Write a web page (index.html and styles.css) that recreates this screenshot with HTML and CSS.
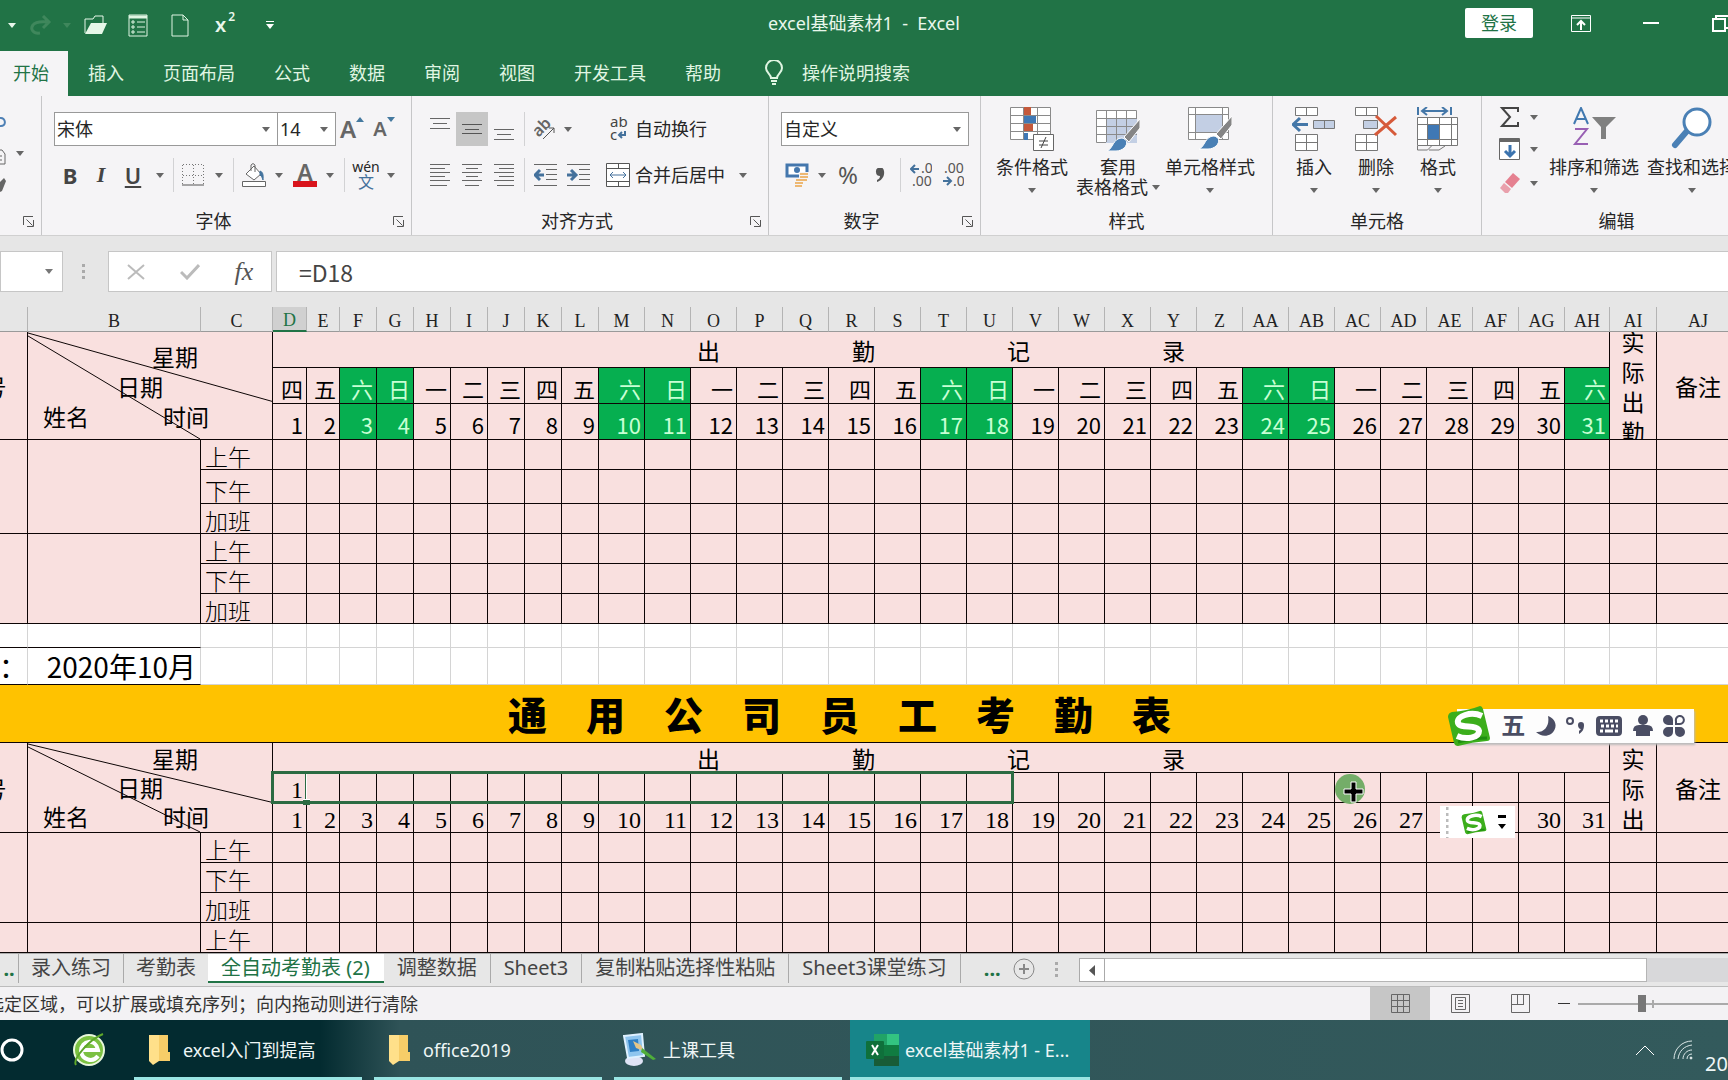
FILE: index.html
```html
<!DOCTYPE html>
<html lang="zh-CN">
<head>
<meta charset="utf-8">
<title>excel基础素材1 - Excel</title>
<link rel="stylesheet" href="styles.css">
</head>
<body>
<svg class="defs" aria-hidden="true">
  <symbol id="caret" viewBox="0 0 8 5"><path d="M0 0h8L4 5z" fill="currentColor"/></symbol>
  <symbol id="launch" viewBox="0 0 11 11"><path d="M.5 9V.5H10M3.500 3.500l6 6M10.500 4v6.500H4" fill="none" stroke="#555"/></symbol>
  <symbol id="folder" viewBox="0 0 22 32"><path d="M3 1h17v22H3z" fill="#e9b949"/><path d="M1 1h10v26l-6 4-4-4z" fill="#ffe08a"/><path d="M11 1h9v17h2v9H11z" fill="#f7cd68"/></symbol>
  <symbol id="sogou" viewBox="0 0 44 42"><path d="M5 7Q20 6 33 1q2 0 3 3l7 29q0 3-3 3Q25 37 11 41q-3 0-4-3L1 12q0-4 4-5z" fill="#3cae1c"/><path d="M11 37q14-4 29-4" fill="none" stroke="#1f8f10" stroke-width="3"/><path d="M35 11C24 6 9 11 11 18c2 6 20 1 21 8 0 7-13 9-22 5" fill="none" stroke="#fff" stroke-width="6"/></symbol>
</svg>

<header class="titlebar">
  <div class="quick">
    <button aria-label="撤消选项"><svg width="8" height="5"><use href="#caret"/></svg></button>
    <button class="dim" aria-label="恢复"><svg width="22" height="20" viewBox="0 0 22 20" fill="none" stroke="currentColor" stroke-width="3"><path d="M10 18C3 19 0 14 3 10c2-3 7-4 16-3M13 1l6 6-6 6"/></svg></button>
    <button class="dim" aria-label="恢复选项"><svg width="8" height="5"><use href="#caret"/></svg></button>
    <button aria-label="打开"><svg width="24" height="20" viewBox="0 0 24 20"><path d="M1 18V4h8l2-3h8v7" fill="none" stroke="#e6f7e8"/><path d="M7 8h16l-5 11H1z" fill="#e6f7e8"/></svg></button>
    <button aria-label="窗体"><svg width="20" height="23" viewBox="0 0 20 23" fill="none" stroke="#dff5e2"><path d="M1 1h18v21H1z"/><path d="M1 3h18" stroke-width="3"/><path d="M4 7h2v2H4zM4 12h2v2H4zM4 17h2v2H4zM9 8h8M9 13h8M9 18h8"/></svg></button>
    <button aria-label="新建"><svg width="18" height="23" viewBox="0 0 18 23" fill="none" stroke="#dff5e2"><path d="M1 1h11l5 5v16H1zM12 1v5h5"/></svg></button>
    <button class="sup" aria-label="上标">x<sup>2</sup></button>
    <button aria-label="自定义快速访问工具栏"><svg width="8" height="8" viewBox="0 0 8 8"><path d="M0 .5h8" stroke="#fff"/><path d="M0 3h8L4 8z" fill="#fff"/></svg></button>
  </div>
  <h1>excel基础素材1&nbsp; -&nbsp; Excel</h1>
  <div class="window">
    <button class="login">登录</button>
    <button class="wbtn" aria-label="功能区显示选项"><svg width="20" height="17" viewBox="0 0 20 17" fill="none" stroke="#fff"><path d="M.5.5h19v16H.5zM1 3h18"/><path d="M10 15V6M6 10l4-4 4 4" stroke-width="2"/></svg></button>
    <button class="wbtn" aria-label="最小化"><svg width="16" height="2"><path d="M0 1h16" stroke="#fff" stroke-width="2"/></svg></button>
    <button class="wbtn" aria-label="还原"><svg width="18" height="17" viewBox="0 0 18 17" fill="none" stroke="#fff" stroke-width="2"><path d="M1 4h12v12H1zM4 4V1h13v12h-4"/></svg></button>
  </div>
</header>

<nav class="tabs">
  <button class="on">开始</button><button>插入</button><button>页面布局</button><button>公式</button><button>数据</button><button>审阅</button><button>视图</button><button>开发工具</button><button>帮助</button>
  <button class="tell"><svg width="18" height="25" viewBox="0 0 18 25" fill="none" stroke="#dff5e2" stroke-width="2"><path d="M6 18c0-4-5-5-5-10a8 8 0 0 1 16 0c0 5-5 6-5 10zM6 21h6M7 24h4"/></svg>操作说明搜索</button>
</nav>

<main class="ribbon">
  <section class="group clip">
    <div class="cliptools">
      <svg width="8" height="90" viewBox="0 0 8 90" fill="none"><path d="M0 6c6-1 7 9 0 8" stroke="#4e80b5" stroke-width="2"/><path d="M-6 38h8l3 4v10h-11M-4 44h6M-4 48h6" stroke="#666"/><path d="M-2 72l6-6 2 3-4 10-4 2z" fill="#666"/></svg>
      <button aria-label="复制选项"><svg width="8" height="5"><use href="#caret"/></svg></button>
    </div>
    <footer><span></span><button aria-label="剪贴板设置"><svg width="11" height="11"><use href="#launch"/></svg></button></footer>
  </section>

  <section class="group font">
    <div class="row font1">
      <div class="combo"><input aria-label="字体" value="宋体"><button aria-label="选择字体"><svg width="8" height="5"><use href="#caret"/></svg></button></div>
      <div class="combo"><input aria-label="字号" value="14"><button aria-label="选择字号"><svg width="8" height="5"><use href="#caret"/></svg></button></div>
      <button class="grow" aria-label="增大字号">A<svg width="8" height="5" viewBox="0 0 8 5"><path d="M0 5h8L4 0z" fill="#44799f"/></svg></button>
      <button class="grow less" aria-label="减小字号">A<svg width="8" height="5" viewBox="0 0 8 5"><path d="M0 0h8L4 5z" fill="#44799f"/></svg></button>
    </div>
    <div class="row font2">
      <button class="b">B</button><button class="i">I</button><button class="u">U</button><button aria-label="下划线选项"><svg width="8" height="5"><use href="#caret"/></svg></button><i class="sep"></i>
      <button aria-label="边框"><svg width="22" height="22" viewBox="0 0 22 22" stroke="#777" fill="none"><path d="M1 .5h20M.5 1v20M21.500 1v20M11.500 1v20M1 11.500h20" stroke-dasharray="1 2"/><path d="M0 21h22" stroke="#555"/></svg></button><button aria-label="边框选项"><svg width="8" height="5"><use href="#caret"/></svg></button><i class="sep"></i>
      <button aria-label="填充颜色"><svg width="24" height="24" viewBox="0 0 24 24" fill="none" stroke="#666"><path d="M4 11l8-8 7 8-7 6z" fill="#fff"/><path d="M9 8V2q2-3 4 0v7"/><path d="M18 8q4 1 3 9-1-4-3-5z" fill="#44749e" stroke="#44749e"/><path d="M.5 18.500h23v5H.5z" fill="#fff"/></svg></button><button aria-label="填充选项"><svg width="8" height="5"><use href="#caret"/></svg></button>
      <button class="colour" aria-label="字体颜色">A</button><button aria-label="字体颜色选项"><svg width="8" height="5"><use href="#caret"/></svg></button><i class="sep"></i>
      <button class="wen">wén<span>文</span></button><button aria-label="拼音选项"><svg width="8" height="5"><use href="#caret"/></svg></button>
    </div>
    <footer><span>字体</span><button aria-label="字体设置"><svg width="11" height="11"><use href="#launch"/></svg></button></footer>
  </section>

  <section class="group align">
    <div class="halves">
      <div class="stack">
        <div class="row al1">
          <button aria-label="顶端对齐"><svg width="20" height="22" viewBox="0 0 20 22" stroke="#666"><path d="M0 .5h20M3 5.500h14M0 10.500h20"/></svg></button>
          <button class="pressed" aria-label="垂直居中"><svg width="20" height="22" viewBox="0 0 20 22" stroke="#555"><path d="M0 6.500h20M3 11.500h14M0 15.500h20"/></svg></button>
          <button aria-label="底端对齐"><svg width="20" height="22" viewBox="0 0 20 22" stroke="#666"><path d="M0 11.500h20M3 16.500h14M0 21.500h20"/></svg></button>
          <i class="sep"></i>
          <button aria-label="方向"><svg width="22" height="22" viewBox="0 0 22 22"><text x="0" y="15" transform="rotate(-45 8 12)" font-size="16" font-weight="600" fill="#666">ab</text><path d="M9 21L20 10M15 10h5v5" stroke="#555" fill="none"/></svg></button>
          <button aria-label="方向选项"><svg width="8" height="5"><use href="#caret"/></svg></button>
        </div>
        <div class="row al2">
          <button aria-label="左对齐"><svg width="20" height="22" viewBox="0 0 20 22" stroke="#666"><path d="M0 .5h20M0 4.500h15M0 8.500h20M0 12.500h15M0 16.500h20M0 21.500h17"/></svg></button>
          <button aria-label="居中"><svg width="20" height="22" viewBox="0 0 20 22" stroke="#666"><path d="M0 .5h20M4 4.500h12M0 8.500h20M4 12.500h12M0 16.500h20M3 21.500h14"/></svg></button>
          <button aria-label="右对齐"><svg width="20" height="22" viewBox="0 0 20 22" stroke="#666"><path d="M0 .5h20M5 4.500h15M0 8.500h20M5 12.500h15M0 16.500h20M3 21.500h17"/></svg></button>
          <i class="sep"></i>
          <button aria-label="减少缩进"><svg width="23" height="22" viewBox="0 0 23 22" stroke="#666"><path d="M0 .5h23M12 5.500h11M12 10.500h11M12 15.500h11M0 21.500h23"/><path d="M6 6l-5 5 5 5M1 11h9" stroke="#44719c" stroke-width="3" fill="none"/></svg></button>
          <button aria-label="增加缩进"><svg width="23" height="22" viewBox="0 0 23 22" stroke="#666"><path d="M0 .5h23M12 5.500h11M12 10.500h11M12 15.500h11M0 21.500h23"/><path d="M4 6l5 5-5 5M0 11h9" stroke="#44719c" stroke-width="3" fill="none"/></svg></button>
        </div>
      </div>
      <i class="sep tall"></i>
      <div class="stack">
        <div class="row"><button class="labelled"><svg width="24" height="24" viewBox="0 0 24 24"><text x="4" y="10" font-size="15" fill="#444">ab</text><text x="4" y="23" font-size="15" fill="#444">c</text><path d="M19 14v4h-6M16 15l-3 3 3 3" stroke="#44719c" stroke-width="2" fill="none"/></svg>自动换行</button></div>
        <div class="row"><button class="labelled"><svg width="24" height="24" viewBox="0 0 24 24" fill="#fff" stroke="#555"><path d="M.5.500h23v23H.5zM.5 5.500h23M.5 18.500h23M12.500 1v5M12.500 18v5"/><path d="M4 12h16M7 9l-3 3 3 3M17 9l3 3-3 3" stroke="#44719c" fill="none"/></svg>合并后居中</button><button class="drop" aria-label="合并选项"><svg width="8" height="5"><use href="#caret"/></svg></button></div>
      </div>
    </div>
    <footer><span>对齐方式</span><button aria-label="对齐设置"><svg width="11" height="11"><use href="#launch"/></svg></button></footer>
  </section>

  <section class="group number">
    <div class="row"><div class="combo pick"><select aria-label="数字格式"><option>自定义</option></select><svg width="8" height="5"><use href="#caret"/></svg></div></div>
    <div class="row num2">
      <button aria-label="会计格式"><svg width="24" height="24" viewBox="0 0 24 24"><path d="M2 2h20v11H2z" fill="#fff" stroke="#4477ad" stroke-width="3"/><circle cx="12" cy="7" r="3" fill="#4477ad"/><path d="M14 9h10v12h-6v3H9v-8h5z" fill="#f5f4f6"/><path d="M15 11h8M15 14h8M11 17h11M10 20h8M10 23h7" stroke="#edb873" stroke-width="2"/></svg></button>
      <button aria-label="会计格式选项"><svg width="8" height="5"><use href="#caret"/></svg></button>
      <button class="pct">%</button>
      <button aria-label="千位分隔"><svg width="10" height="14" viewBox="0 0 10 14"><path d="M1 4a4 4 0 0 1 8-1c1 6-3 10-7 11v-2c2-1 3-2 3-4-2 0-4-1-4-4z" fill="#555"/></svg></button>
      <i class="sep"></i>
      <button class="dec" aria-label="增加小数位"><svg width="22" height="24" viewBox="0 0 22 24"><text x="11" y="10" font-size="14">.0</text><text x="2" y="23" font-size="14">.00</text><path d="M5 2L1 6l4 4M1 6h8" fill="none" stroke="#44719c" stroke-width="2"/></svg></button>
      <button class="dec" aria-label="减少小数位"><svg width="22" height="24" viewBox="0 0 22 24"><text x="2" y="10" font-size="14">.00</text><text x="11" y="23" font-size="14">.0</text><path d="M5 14l4 4-4 4M1 18h8" fill="none" stroke="#44719c" stroke-width="2"/></svg></button>
    </div>
    <footer><span>数字</span><button aria-label="数字设置"><svg width="11" height="11"><use href="#launch"/></svg></button></footer>
  </section>

  <section class="group styles">
    <div class="bigs">
      <button class="big"><svg width="44" height="44" viewBox="0 0 44 44" fill="none" stroke="#8a8a8a"><path d="M.5.500h40v32h-40z" fill="#fff"/><path d="M13 0h8v8h-8zM13 17h10v8H13z" fill="#c4593b" stroke="none"/><path d="M13 9h13v7H13zM13 26h5v7h-5z" fill="#3f78b5" stroke="none"/><path d="M13.500 0v33M27.500 0v33M0 8.500h41M0 16.500h41M0 24.500h41"/><path d="M23.500 27.500h20v16h-20z" fill="#fff" stroke="#666"/><path d="M29 34h9M29 38h9M36 30l-5 11" stroke="#444"/></svg><span>条件格式</span><svg width="8" height="5"><use href="#caret"/></svg></button>
      <button class="big"><svg width="44" height="44" viewBox="0 0 44 44" fill="none" stroke="#8a8a8a"><path d="M.5 3.500h40v32h-40z" fill="#fff"/><path d="M10 12h31v24H10z" fill="#c3cfe4" stroke="none"/><path d="M10.500 3v32M20.500 3v32M30.500 3v32M0 11.500h41M0 19.500h41M0 27.500h41"/><path d="M44 12L28 30l5 5 11-14z" fill="#858585" stroke="#fff"/><path d="M11 44c6-2 6-13 15-13 9 2 4 13-6 13z" fill="#4a80b5" stroke="#fff"/></svg><span>套用</span><span class="line">表格格式<svg width="8" height="5"><use href="#caret"/></svg></span></button>
      <button class="big wide"><svg width="44" height="44" viewBox="0 0 44 44" fill="none" stroke="#8a8a8a"><path d="M.5.500h40v32h-40z" fill="#fff"/><path d="M8 8h26v17H8z" fill="#c3cfe4" stroke="none"/><path d="M7.500 0v33M34.500 0v33M0 7.500h41M0 25.500h41"/><path d="M44 9L28 27l5 5 11-14z" fill="#858585" stroke="#fff"/><path d="M11 42c6-2 6-13 15-13 9 2 4 13-6 13z" fill="#4a80b5" stroke="#fff"/></svg><span>单元格样式</span><svg width="8" height="5"><use href="#caret"/></svg></button>
    </div>
    <footer><span>样式</span></footer>
  </section>

  <section class="group cells">
    <div class="bigs">
      <button class="big"><svg width="44" height="44" viewBox="0 0 44 44" fill="#fff" stroke="#777"><path d="M3.500.500h22v8h-22zM14.500.500v8M3.500 27.500h22v16h-22zM14.500 27.500v16M3.500 35.500h22"/><path d="M21.500 13.500h21v8h-21zM32.500 13.500v8" fill="#c3cfe4"/><path d="M16 17.500H2M8 11l-7 6.500L8 24" fill="none" stroke="#4477a8" stroke-width="3"/></svg><span>插入</span><svg width="8" height="5"><use href="#caret"/></svg></button>
      <button class="big"><svg width="44" height="44" viewBox="0 0 44 44" fill="#fff" stroke="#777"><path d="M1.500.500h22v8h-22zM12.500.500v8M1.500 27.500h22v16h-22zM12.500 27.500v16M1.500 35.500h22"/><path d="M9.500 13.500h14v8h-14z" fill="#c3cfe4"/><path d="M22 9l20 19M42 10L21 28" fill="none" stroke="#d65a3a" stroke-width="3"/></svg><span>删除</span><svg width="8" height="5"><use href="#caret"/></svg></button>
      <button class="big"><svg width="44" height="44" viewBox="0 0 44 44" fill="none" stroke="#777"><path d="M1.500 10.500h40v28h-40z" fill="#fff"/><path d="M11.500 10v29M23.500 10v29M35.500 10v29M1 17.500h41M1 32.500h41"/><path d="M12 18h11v14H12z" fill="#3f78b5" stroke="none"/><path d="M1.500 39v4h10l4-4M13 43h10l6-4"/><path d="M2 0v8M35 0v8" stroke="#4477a8" stroke-width="2"/><path d="M7 4h23M11 0L6 4l5 4M26 0l5 4-5 4" stroke="#4477a8" stroke-width="2"/></svg><span>格式</span><svg width="8" height="5"><use href="#caret"/></svg></button>
    </div>
    <footer><span>单元格</span></footer>
  </section>

  <section class="group edit">
    <div class="bigs">
      <div class="minis">
        <button aria-label="自动求和"><svg width="22" height="20" viewBox="0 0 22 20" fill="none" stroke="#444" stroke-width="2"><path d="M19 5V1H3l8 9-8 9h16v-4"/></svg><svg width="8" height="5"><use href="#caret"/></svg></button>
        <button aria-label="填充"><svg width="22" height="22" viewBox="0 0 22 22" fill="#fff" stroke="#666"><path d="M.5.500h20v21H.5z"/><path d="M1 2.500h20" stroke-width="3"/><path d="M11 7v11M6 13l5 5 5-5" fill="none" stroke="#3b73ae" stroke-width="3"/></svg><svg width="8" height="5"><use href="#caret"/></svg></button>
        <button aria-label="清除"><svg width="22" height="20" viewBox="0 0 22 20"><path d="M14 0l7 6-8 9-7-6z" fill="#e58090"/><path d="M5 10l7 6-3 4H6l-5-5z" fill="#e9a0ac"/></svg><svg width="8" height="5"><use href="#caret"/></svg></button>
      </div>
      <button class="big wide"><svg width="44" height="44" viewBox="0 0 44 44"><path d="M2 17L9 1l7 16M5 12h8" fill="none" stroke="#4179b0" stroke-width="2"/><path d="M3 22h12L3 37h13" fill="none" stroke="#985fb3" stroke-width="2"/><path d="M20 10h24L34 20v12h-5V20z" fill="#808080"/></svg><span>排序和筛选</span><svg width="8" height="5"><use href="#caret"/></svg></button>
      <button class="big wide"><svg width="44" height="44" viewBox="0 0 44 44"><path d="M17 24L5 38" stroke="#4a80b5" stroke-width="6" stroke-linecap="round"/><circle cx="27" cy="15" r="13" fill="#fff" stroke="#4a80b5" stroke-width="3"/></svg><span>查找和选择</span><svg width="8" height="5"><use href="#caret"/></svg></button>
    </div>
    <footer><span>编辑</span></footer>
  </section>
</main>

<div class="formula">
  <div class="namebox"><button aria-label="名称框"><svg width="8" height="5"><use href="#caret"/></svg></button></div>
  <svg class="grip" width="4" height="16" viewBox="0 0 4 16"><path d="M0 0h3v3H0zM0 6h3v3H0zM0 12h3v3H0z" fill="#aaa"/></svg>
  <div class="fxbox">
    <button aria-label="取消"><svg width="18" height="16" viewBox="0 0 18 16"><path d="M1 1l16 14M17 1L1 15" stroke="#bbb" stroke-width="2"/></svg></button>
    <button aria-label="输入"><svg width="20" height="16" viewBox="0 0 20 16"><path d="M1 8l6 6L19 1" fill="none" stroke="#bbb" stroke-width="3"/></svg></button>
    <button class="fx">fx</button>
  </div>
  <input class="expr" aria-label="编辑栏" value="=D18">
</div>

<div class="sheet">
  <div class="canvas">
    <table id="grid"></table>
    <div class="range"></div><div class="active"></div><div class="handle"></div>
    <svg class="pointer" width="32" height="32" viewBox="0 0 32 32"><circle cx="15" cy="15" r="15" fill="#74ad68"/><path d="M16 8h5v7h7v5h-7v8h-5v-8H9v-5h7z" fill="#000" stroke="#fff"/></svg>
    <div class="ime">
      <svg width="44" height="42"><use href="#sogou"/></svg>
      <b>五</b>
      <svg width="20" height="22" viewBox="0 0 20 22"><path d="M12 1c9 3 10 13 3 18-5 3-11 2-15-2 8 1 14-6 12-16z" fill="#4a4d63"/></svg>
      <svg width="20" height="18" viewBox="0 0 20 18"><circle cx="4" cy="4" r="3" fill="none" stroke="#4a4d63" stroke-width="2"/><path d="M12 8a3 3 0 0 1 6 0c0 5-2 7-5 9v-3l2-2c-2 0-3-2-3-4z" fill="#4a4d63"/></svg>
      <svg width="26" height="20" viewBox="0 0 26 20" stroke="#4a4d63" stroke-width="2" fill="none"><rect x="1" y="1" width="24" height="18" rx="3" fill="#4a4d63"/><path d="M4 5h18M5 10h17" stroke="#fff" stroke-width="3" stroke-dasharray="3 2"/><path d="M4 15h3M9 15h8M19 15h3" stroke="#fff" stroke-width="3"/></svg>
      <svg width="20" height="22" viewBox="0 0 20 22" fill="#4a4d63"><circle cx="10" cy="5" r="5"/><path d="M0 16q0-6 6-6h8q6 0 6 6h-3v5H3v-5z"/></svg>
      <svg width="22" height="22" viewBox="0 0 22 22" fill="#4a4d63"><path d="M10 10H5a5 5 0 1 1 5-5zM10 12H5a5 5 0 1 0 5 5zM12 12h5a5 5 0 1 1-5 5z"/><path d="M13 9V6a4 4 0 1 1 4 3z" fill="none" stroke="#4a4d63" stroke-width="2"/></svg>
    </div>
    <div class="mini">
      <svg width="3" height="32"><path d="M1 1v31" stroke="#bbb" stroke-width="3" stroke-dasharray="3 3"/></svg>
      <svg width="26" height="25"><use href="#sogou"/></svg>
      <svg width="8" height="14" viewBox="0 0 8 14"><path d="M0 0h8v3H0zM0 9h8l-4 5z"/></svg>
    </div>
  </div>
</div>

<div class="sheettabs">
  <button class="more first">..</button>
  <button>录入练习</button><button>考勤表</button><button class="on">全自动考勤表 (2)</button><button>调整数据</button><button>Sheet3</button><button>复制粘贴选择性粘贴</button><button>Sheet3课堂练习</button>
  <button class="more">...</button>
  <button class="add" aria-label="新工作表"><svg width="22" height="22" viewBox="0 0 22 22" fill="none" stroke="#888"><circle cx="11" cy="11" r="10"/><path d="M11 6v10M6 11h10" stroke-width="2"/></svg></button>
  <svg class="grip" width="4" height="16" viewBox="0 0 4 16"><path d="M0 0h3v3H0zM0 6h3v3H0zM0 12h3v3H0z" fill="#aaa"/></svg>
  <div class="hscroll"><button aria-label="向左滚动"><svg width="6" height="11" viewBox="0 0 6 11"><path d="M6 0v11L0 5.500z" fill="#555"/></svg></button><div class="thumb"></div></div>
</div>

<div class="status">
  <span class="msg">选定区域，可以扩展或填充序列；向内拖动则进行清除</span>
  <button class="view on" aria-label="普通"><svg width="19" height="19" viewBox="0 0 19 19" fill="none" stroke="#666"><path d="M.5.500h18v18H.5zM6.500 0v19M12.500 0v19M0 6.500h19M0 12.500h19"/></svg></button>
  <button class="view" aria-label="页面布局"><svg width="19" height="19" viewBox="0 0 19 19" fill="none" stroke="#666"><path d="M.5.500h18v18H.5zM4.500 3.500h10v12h-10zM7 6.500h5M7 9.500h5M7 12.500h5"/></svg></button>
  <button class="view" aria-label="分页预览"><svg width="19" height="19" viewBox="0 0 19 19" fill="none" stroke="#666"><path d="M.5.500h18v18H.5zM.5 10.500h12M6.500 0v10M12.500 0v11"/></svg></button>
  <button class="minus" aria-label="缩小"><svg width="12" height="1"><path d="M0 .5h12" stroke="#333"/></svg></button>
  <input class="zoom" type="range" aria-label="显示比例" min="0" max="100" value="42">
</div>

<div class="taskbar">
  <button class="cortana" aria-label="Cortana"><svg width="24" height="24" viewBox="0 0 24 24"><circle cx="12" cy="12" r="10" fill="none" stroke="#fff" stroke-width="3"/></svg></button>
  <button class="browser" aria-label="浏览器"><svg width="34" height="34" viewBox="0 0 34 34"><circle cx="17" cy="17" r="15" fill="#7cc142" stroke="#e9f7dc" stroke-width="2"/><path d="M26 23c-5 7-16 4-17-5 0-11 15-13 17-1H10" fill="none" stroke="#fff" stroke-width="4"/><path d="M4 32C0 26 18 6 31 1" fill="none" stroke="#5ea72a" stroke-width="2"/></svg></button>
  <button class="task"><svg width="22" height="32"><use href="#folder"/></svg>excel入门到提高</button>
  <button class="task"><svg width="22" height="32"><use href="#folder"/></svg>office2019</button>
  <button class="task tool"><svg width="34" height="34" viewBox="0 0 34 34"><ellipse cx="11" cy="28" rx="9" ry="5" fill="#dfe3f5"/><path d="M1 3l18-2 2 22-16 2z" fill="#8fc5ee" stroke="#dff1ff" stroke-width="2"/><path d="M5 7l10-1 1 12-9 1z" fill="#2f7fc4"/><path d="M10 8l8 4 3 6-8-3z" fill="#e3c589"/><path d="M19 15l14 11-3 1-12-8z" fill="#4fae3a"/></svg>上课工具</button>
  <button class="task current"><svg width="34" height="34" viewBox="0 0 34 34"><path d="M8 1h13v11H8z" fill="#21a366"/><path d="M21 1h12v11H21z" fill="#33c481"/><path d="M8 12h25v11H8z" fill="#107c41"/><path d="M8 23h25v10H8z" fill="#185c37"/><rect y="8" width="18" height="18" rx="1" fill="#0f703b"/><path d="M6 12l6 10M12 12L6 22" stroke="#fff" stroke-width="2"/></svg>excel基础素材1 - E...</button>
  <div class="tray">
    <svg width="20" height="11" viewBox="0 0 20 11"><path d="M1 10l9-9 9 9" fill="none" stroke="#fff"/></svg>
    <svg width="20" height="20" viewBox="0 0 20 20" fill="none" stroke="#dce8e8"><path d="M1 19C1 9 9 1 19 1M5 19C6 11 11 6 19 5M10 19c0-5 4-9 9-9M14 19c0-3 2-5 5-5"/><circle cx="18" cy="18" r="1" fill="#fff"/></svg>
    <span>20</span>
  </div>
</div>
<script src="grid.js"></script>
</body>
</html>
```
FILE: grid.js
```js
// Builds the attendance worksheet: columns A to AJ, two roster blocks and the banner between them.
const grid = document.getElementById('grid');
const letters = ['A', 'B', 'C', 'D', 'E', 'F', 'G', 'H', 'I', 'J', 'K', 'L', 'M', 'N', 'O', 'P', 'Q', 'R', 'S', 'T', 'U', 'V', 'W', 'X', 'Y', 'Z',
  'AA', 'AB', 'AC', 'AD', 'AE', 'AF', 'AG', 'AH', 'AI', 'AJ'];
const widths = letters.map((name, i) => {
  if (i >= 5 && i <= 11) return 37;
  return { A: 88, B: 173, C: 72, D: 34, E: 33, AH: 45, AI: 47, AJ: 83 }[name] || 46;
});
const week = '四五六日一二三';
const days = Array.from({ length: 31 }, (_, i) => i + 1);
const off = d => '六日'.includes(week[(d - 1) % 7]);
const empty = n => '<td></td>'.repeat(n);
const row = (h, cells, cls = '') => `<tr class="h${h} ${cls}">${cells}</tr>`;

function rosterHead(h, block, y1) {
  const total = h * 3;
  return row(h, `<th rowspan="3">序号</th>
    <th rowspan="3" colspan="2" class="corner"><svg viewBox="0 0 244 ${total}" preserveAspectRatio="none"><path d="M0 1L244 ${y1}M0 4L172 ${total}"/></svg>
      <div><p class="p1">星期</p><p class="p2">日期</p><p class="p3">姓名</p><p class="p4">时间</p></div></th>
    <th colspan="31"><div class="spread"><span>出</span><span>勤</span><span>记</span><span>录</span></div></th>
    <th rowspan="3" class="stackcell"><div class="v${h}"><p>实<br>际<br>出${h > 30 ? '<br>勤' : ''}</p></div></th><th rowspan="3">备注</th>`, block);
}
function roster(heights) {
  return heights.map((h, i) => row(h, (i % 3 ? '' : `<td rowspan="${Math.min(3, heights.length - i)}"></td>`.repeat(2)) +
    `<td class="shift">${['上午', '下午', '加班'][i % 3]}</td>` + empty(33))).join('');
}

let html = '<colgroup>' + widths.map(w => `<col style="width:${w}px">`).join('') + '</colgroup>';
html += '<thead><tr>' + letters.map(l => `<th${l === 'D' ? ' class="sel"' : ''}>${l}</th>`).join('') + '</tr></thead><tbody>';
html += rosterHead(36, 'top', 70);
html += row(36, days.map(d => `<td class="${off(d) ? 'off' : ''}">${week[(d - 1) % 7]}</td>`).join(''), 'top nums');
html += row(36, days.map(d => `<td class="${off(d) ? 'off' : ''}">${d}</td>`).join(''), 'top nums');
html += roster([30, 34, 30, 30, 30, 30]);
html += row(24, empty(36), 'blank under');
html += row(37, '<td class="date">：</td><td class="date">2020年10月</td>' + empty(34), 'blank');
html += row(58, '<th colspan="36" class="banner">通　用　公　司　员　工　考　勤　表</th>');
html += rosterHead(30, 'low', 60);
html += row(30, '<td>1</td>' + empty(30), 'low nums');
html += row(30, days.map(d => `<td>${d}</td>`).join(''), 'low nums');
html += roster([30, 30, 30, 30]);
html += row(30, empty(36));
grid.innerHTML = html + '</tbody>';
```
FILE: styles.css
```css
* { box-sizing: border-box; }
body { margin: 0; height: 100vh; display: flex; flex-direction: column; overflow: hidden; background: #e6e6e6; color: #222; font: 18px/24px "Noto Sans", "Noto Sans CJK SC", sans-serif; }
button, input, select { font: inherit; color: inherit; background: none; border: 0; padding: 0; margin: 0; min-width: 0; border-radius: 0; }
button { display: flex; align-items: center; justify-content: center; white-space: nowrap; }
svg { display: block; flex: none; }
p { margin: 0; }
.defs { position: absolute; width: 0; height: 0; }

.titlebar { flex: none; height: 51px; background: #217346; color: #e9f7ec; display: grid; grid-template-columns: 1fr auto 1fr; align-items: start; overflow: hidden; }
.quick { display: grid; grid-template-columns: 24px 34px 18px 40px 44px 40px 50px 40px; height: 50px; }
.quick .dim { color: #3f875c; }
.sup { font-weight: 600; font-size: 20px; }
.sup sup { font-size: 12px; line-height: 12px; padding: 0 0 16px 2px; }
h1 { margin: 0; padding-top: 11px; font-size: 18px; font-weight: 400; }
.window { display: flex; justify-content: flex-end; align-items: center; height: 46px; margin-right: -28px; }
.login { width: 68px; height: 30px; background: #fff; color: #217346; border-radius: 2px; margin-right: 13px; }
.wbtn { width: 70px; height: 46px; }

.tabs { flex: none; height: 45px; background: #217346; color: #e0f6e3; display: flex; gap: 1px; }
.tabs button { padding: 0 19px 2px; }
.tabs .on { background: #f5f4f6; color: #217346; padding-left: 13px; }
.tabs .tell { gap: 19px; padding-left: 24px; }

.ribbon { flex: none; height: 140px; background: #f5f4f6; border-bottom: 1px solid #d0d0d0; display: flex; overflow: hidden; color: #262626; }
.group { flex: none; padding: 16px 0 0 12px; display: flex; flex-direction: column; gap: 12px; border-right: 1px solid #c6c6c8; }
.group footer { display: flex; height: 24px; margin: auto 0 2px -12px; text-align: center; }
.group footer span { flex: 1; }
.group footer button { width: 26px; color: #444; }
.clip { width: 42px; padding-left: 0; } .clip footer { margin-left: 0; }
.font { width: 370px; } .align { width: 357px; } .number { width: 212px; }
.styles { width: 292px; } .cells { width: 209px; } .edit { width: 270px; }
.group use { color: #666; }
.cliptools { display: flex; justify-content: space-between; height: 82px; }
.cliptools button { width: 26px; margin-right: 10px; }
.row { display: grid; grid-auto-flow: column; justify-content: start; height: 34px; }
.font1 { grid-template-columns: 224px 58px 32px 32px; }
.font2 { grid-template-columns: 32px 30px 34px 20px 6px 34px 18px 10px 32px 18px 34px 16px 12px 32px 18px; }
.al1 { grid-template-columns: 32px 32px 32px 8px 34px 12px; }
.al2 { grid-template-columns: 32px 32px 32px 8px 34px 32px; }
.num2 { grid-template-columns: 32px 18px 34px 30px 10px 32px 32px; }
.sep { width: 1px; height: 34px; background: #d2d2d4; justify-self: center; }
.sep.tall { height: 86px; margin: -4px 4px 0; }
.combo { display: flex; background: #fff; border: 1px solid #999; height: 34px; }
.combo + .combo { margin-left: -1px; }
.combo input { flex: 1; padding-left: 2px; }
.combo button { width: 22px; }
.pick { width: 188px; align-items: center; padding-right: 7px; }
.pick select { flex: 1; appearance: none; padding-left: 2px; height: 32px; }
.grow { font-size: 24px; font-weight: 600; color: #666; align-items: flex-start; padding-top: 5px; }
.grow.less { font-size: 20px; }
.b, .i, .u { font-size: 22px; color: #444; font-weight: bold; }
.i { font-family: "Liberation Serif", serif; font-style: italic; }
.u { text-decoration: underline; font-weight: 600; }
.colour { width: 24px; height: 24px; align-self: center; justify-self: center; border-bottom: 6px solid #d9141c; font-size: 23px; line-height: 18px; color: #666; font-weight: 600; }
.wen { flex-direction: column; font-size: 14px; line-height: 14px; }
.wen span { color: #44719c; font-size: 16px; line-height: 16px; }
.halves { display: flex; }
.stack { flex: none; display: flex; flex-direction: column; gap: 12px; width: 170px; }
.halves .stack:last-child { padding-left: 4px; }
.pressed { background: #c6c6c6; }
.labelled { gap: 5px; }
.drop { width: 36px; }
.pct { font-size: 24px; color: #555; }
.dec { fill: #555; }
.bigs { display: flex; height: 88px; margin-top: -5px; }
.styles .bigs { margin-left: -4px; } .cells .bigs { margin-left: -2px; } .edit .bigs { margin-left: -1px; }
.big { width: 86px; flex-direction: column; justify-content: flex-start; line-height: 20px; }
.cells .big { width: 62px; }
.big.wide { width: 98px; }
.big > span:first-of-type { margin-top: 6px; }
.big > svg:last-child { margin-top: 11px; }
.big .line { display: flex; align-items: center; gap: 4px; height: 24px; }
.minis { display: grid; grid-template-rows: 20px 44px 24px; width: 52px; padding-left: 6px; }
.minis button { justify-content: flex-start; gap: 9px; }

.formula { flex: none; height: 56px; padding-top: 15px; display: flex; }
.formula > div, .expr { background: #fff; border: 1px solid #c6c6c6; height: 41px; display: flex; }
.namebox { width: 63px; justify-content: flex-end; border-left: 0; }
.namebox button { width: 26px; color: #777; }
.grip { align-self: center; margin: 0 20px; }
.formula .grip { margin: 0 22px 0 19px; }
.fxbox { width: 164px; } .fxbox button { flex: 1; }
.fx { font: italic 26px "Liberation Serif", serif; color: #555; }
.expr { flex: 1; margin-left: 4px; border-right: 0; padding-left: 22px; font: 23px "Noto Sans CJK SC", sans-serif; color: #444; }

.sheet { flex: 1; min-height: 0; overflow: hidden; padding-top: 15px; border-bottom: 1px solid #aaa; }
.canvas { position: relative; width: 1740px; }
#grid { table-layout: fixed; width: 1800px; margin-left: -60px; border-spacing: 0; font: 23px/26px "Noto Sans CJK SC", sans-serif; color: #000; }
#grid th, #grid td { padding: 0; font-weight: 400; border: solid #0d0505; border-width: 0 1px 1px 0; background: #f9e0df; white-space: nowrap; }
#grid thead th { height: 25px; padding-top: 3px; background: #e6e6e6; border-color: #b4b4b4; border-bottom-color: #9a9a9a; font: 18px/20px "Liberation Serif", serif; color: #222; }
#grid thead .sel { background: #d0d0d0; color: #217346; border-bottom: 2px solid #217346; }
.h24 { height: 24px; } .h30 { height: 30px; } .h34 { height: 34px; } .h36 { height: 36px; } .h37 { height: 37px; } .h58 { height: 58px; }
#grid .nums td { text-align: right; padding: 0 3px 3px 0; vertical-align: bottom; font-size: 22px; line-height: 24px; }
#grid .low.nums td { font: 24px/24px "Liberation Serif", serif; padding-bottom: 0; }
#grid .off { background: #06af50; color: #c8ffd4; }
#grid .shift { font-weight: 300; padding: 0 0 1px 4px; line-height: 24px; vertical-align: bottom; }
#grid .blank td { background: #fff; border-color: #d4d4d4; }
#grid .under td:nth-child(-n+2), #grid .date { border-bottom-color: #0d0505 !important; }
#grid .date { font-size: 28px; text-align: right; padding-right: 4px; }
#grid .date:first-child { padding-right: 0; }
#grid .banner { background: #ffc200; font-weight: 900; font-size: 39px; line-height: 48px; padding-bottom: 2px; }
.spread { display: flex; justify-content: center; gap: 132px; }
#grid .corner { position: relative; text-align: left; }
.corner svg { position: absolute; inset: 0; width: 100%; height: 100%; }
.corner path { stroke: #0d0505; fill: none; vector-effect: non-scaling-stroke; }
.corner div { display: grid; grid-template-columns: 120px 1fr; line-height: 29px; }
.top .corner div { line-height: 30px; }
.corner p { grid-column: 1 / 3; padding-left: 124px; }
.corner .p2 { padding-left: 89px; }
.corner .p3 { grid-column: 1; padding-left: 15px; }
.corner .p4 { grid-column: 2; padding-left: 15px; }
.stackcell div { overflow: hidden; display: flex; justify-content: center; line-height: 30px; }
.v36 { height: 107px; align-items: center; }
.v30 { height: 89px; }

.range { position: absolute; left: 271px; top: 464px; width: 743px; height: 33px; border: 3px solid #2c6b42; }
.active { position: absolute; left: 305px; top: 467px; width: 2px; height: 27px; background: #2c6b42; border-right: 1px solid #fff; }
.handle { position: absolute; left: 303px; top: 492px; width: 7px; height: 6px; background: #2c6b42; border-top: 1px solid #fff; }
.pointer { position: absolute; left: 1335px; top: 467px; }
.ime { position: absolute; left: 1457px; top: 402px; width: 237px; height: 34px; background: #fdfdfd; box-shadow: 1px 2px 2px #bbb; display: flex; align-items: center; justify-content: space-between; padding-right: 9px; color: #4a4d63; }
.ime > svg:first-child { margin-left: -10px; }
.ime b { font: bold 24px/30px "Noto Sans CJK SC", sans-serif; padding-bottom: 4px; }
.mini { position: absolute; left: 1440px; top: 499px; width: 75px; height: 32px; background: #fff; display: flex; align-items: center; justify-content: space-between; padding: 0 9px 0 6px; }

.sheettabs { flex: none; height: 33px; display: flex; border-bottom: 1px solid #bcbcbc; font-size: 20px; color: #444; background: #e7e7e7; }
.sheettabs > button { height: 29px; padding: 0 12px 2px; border-right: 1px solid #aaa; }
.sheettabs .on { background: #fff; color: #217346; border-bottom: 2px solid #217346; border-right: 0; margin-left: -1px; padding: 0 14px 0 13px; }
.sheettabs .on ~ button { padding: 0 13px 2px; }
.sheettabs .on ~ .more { color: #217346; font-weight: bold; border-right: 0; padding: 0 12px 0 23px; }
.sheettabs .more.first { width: 19px; padding: 0; color: #217346; font-weight: bold; }
.sheettabs .on ~ .add { border: 0; padding: 0; }
.hscroll { flex: 1; margin: 4px 0; display: flex; background: #d8d8da; padding-right: 81px; height: 24px; }
.hscroll button { width: 26px; background: #fff; border: 1px solid #aaa; }
.thumb { flex: 1; background: #fff; border: 1px solid #b5b5b5; border-left: 0; }

.status { flex: none; height: 33px; background: #f3f2f4; display: flex; align-items: center; color: #333; overflow: hidden; }
.msg { flex: 1; margin-left: -14px; white-space: nowrap; }
.view { width: 60px; height: 33px; }
.view.on { background: #c6c6c6; }
.minus { width: 28px; }
.zoom { appearance: none; width: 150px; height: 18px; background: linear-gradient(#aaa, #aaa) center / 100% 2px no-repeat, linear-gradient(#aaa, #aaa) 50% / 2px 8px no-repeat; }
.zoom::-webkit-slider-thumb { appearance: none; width: 8px; height: 17px; background: #777; }

.taskbar { flex: none; height: 60px; display: flex; background: linear-gradient(90deg, #032b30 0, #032b30 320px, #2f5357 400px, #335a5c 100%); color: #eef6f6; }
.cortana { width: 24px; }
.browser { width: 110px; padding-left: 20px; }
.task { width: 228px; margin-right: 12px; padding-left: 14px; gap: 13px; justify-content: flex-start; border-bottom: 3px solid #9ae5e3; border-top: 3px solid transparent; }
.task.tool { padding-left: 9px; gap: 6px; margin-right: 8px; }
.task.current { width: 240px; background: #17858a; padding-left: 16px; gap: 5px; border-top-color: #17858a; }
.tray { margin-left: auto; display: flex; align-items: center; gap: 18px; }
.tray span { font-size: 20px; padding-top: 28px; margin-left: -6px; }
```
